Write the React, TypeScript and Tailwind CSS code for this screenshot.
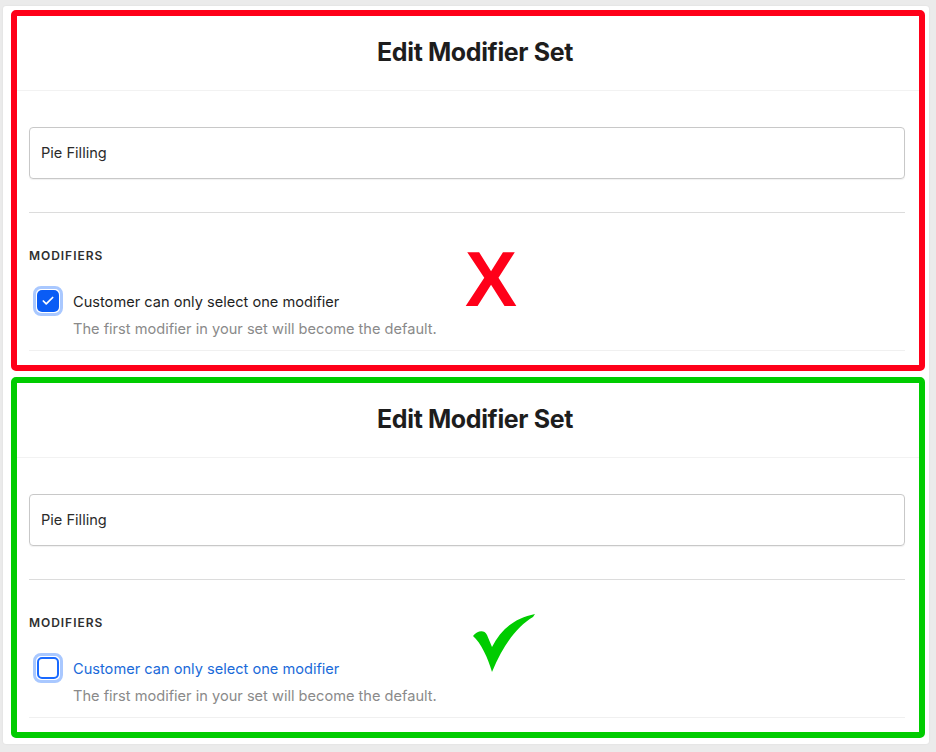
import { Check } from "lucide-react";

type Props = {
  frame: string;
  checked: boolean;
  mark: "x" | "check";
};

function ModifierCard({ frame, checked, mark }: Props) {
  return (
    <div className={`relative rounded-[5px] border-[6px] bg-white ${frame}`}>
      {/* header */}
      <div className="flex h-[75px] items-center justify-center border-b border-[#f2f2f2] pl-[14px]">
        <h1 className="font-['Inter'] text-[25px] font-bold tracking-[-0.015em] text-[#1d1d1d]">
          Edit Modifier Set
        </h1>
      </div>

      <div className="pr-[14px] pl-[12px]">
        {/* name input */}
        <div className="border-b border-[#dcdcdc] pt-[36px] pb-[33px]">
          <div className="flex h-[52px] items-center rounded-[4px] border border-[#c8c8c8] px-[11px] pt-[2px] shadow-[0_1px_1px_rgba(0,0,0,0.06)]">
            <span className="font-['Inter'] text-[14.6px] text-[#2b2b2b]">Pie Filling</span>
          </div>
        </div>

        {/* modifiers */}
        <div className="border-b border-[#f0f0f0] pt-[35px] pb-[11px] font-['Inter']">
          <div className="text-[12px] leading-4 font-semibold tracking-[0.08em] text-[#2f2f2f]">
            MODIFIERS
          </div>
          <div className="mt-[22px] flex items-center gap-[10px] pl-[4px]">
            <div className="flex h-[30px] w-[30px] items-center justify-center rounded-[8px] border-[3px] border-[#a9c8ff]">
              {checked ? (
                <div className="flex h-[22px] w-[22px] items-center justify-center rounded-[5px] bg-[#0a5cf5]">
                  <Check className="h-[14px] w-[14px] text-white" strokeWidth={3} />
                </div>
              ) : (
                <div className="h-[22px] w-[22px] rounded-[5px] border-2 border-[#1a6aff] bg-white" />
              )}
            </div>
            <span
              className={`pt-[3px] text-[14.6px] ${checked ? "text-[#1f1f1f]" : "text-[#1a6ad9]"}`}
            >
              Customer can only select one modifier
            </span>
          </div>
          <p className="mt-[3px] pl-[44px] text-[14.6px] leading-5 text-[#8a8a8a]">
            The first modifier in your set will become the default.
          </p>
        </div>
        <div className="h-[14px]" />
      </div>

      {mark === "x" ? (
        <span className="absolute top-[224px] left-[448px] font-['Liberation_Sans',sans-serif] text-[78px] leading-none font-bold text-[#ff0019]">
          X
        </span>
      ) : (
        <svg
          className="absolute top-[230px] left-[456px]"
          width="62"
          height="60"
          viewBox="0 0 62 60"
        >
          <path
            d="M0 23 C4 18 11 16 14 22 L19 34 C28 16 42 5 62 1 L60 4 C45 13 31 30 19 59 C15 45 8 30 0 23 Z"
            fill="#00cc00"
          />
        </svg>
      )}
    </div>
  );
}

export default function App() {
  return (
    <div className="h-[752px] w-[936px] bg-[#ebebeb] pt-[6px] pl-[3px]">
      <div className="flex h-[738px] w-[926px] flex-col gap-[6px] rounded-[3px] bg-white pt-[4px] pr-[4px] pl-[8px] shadow-[0_0_2px_rgba(0,0,0,0.08)]">
        <ModifierCard frame="border-[#ff0019]" checked mark="x" />
        <ModifierCard frame="border-[#00cc00]" checked={false} mark="check" />
      </div>
    </div>
  );
}
